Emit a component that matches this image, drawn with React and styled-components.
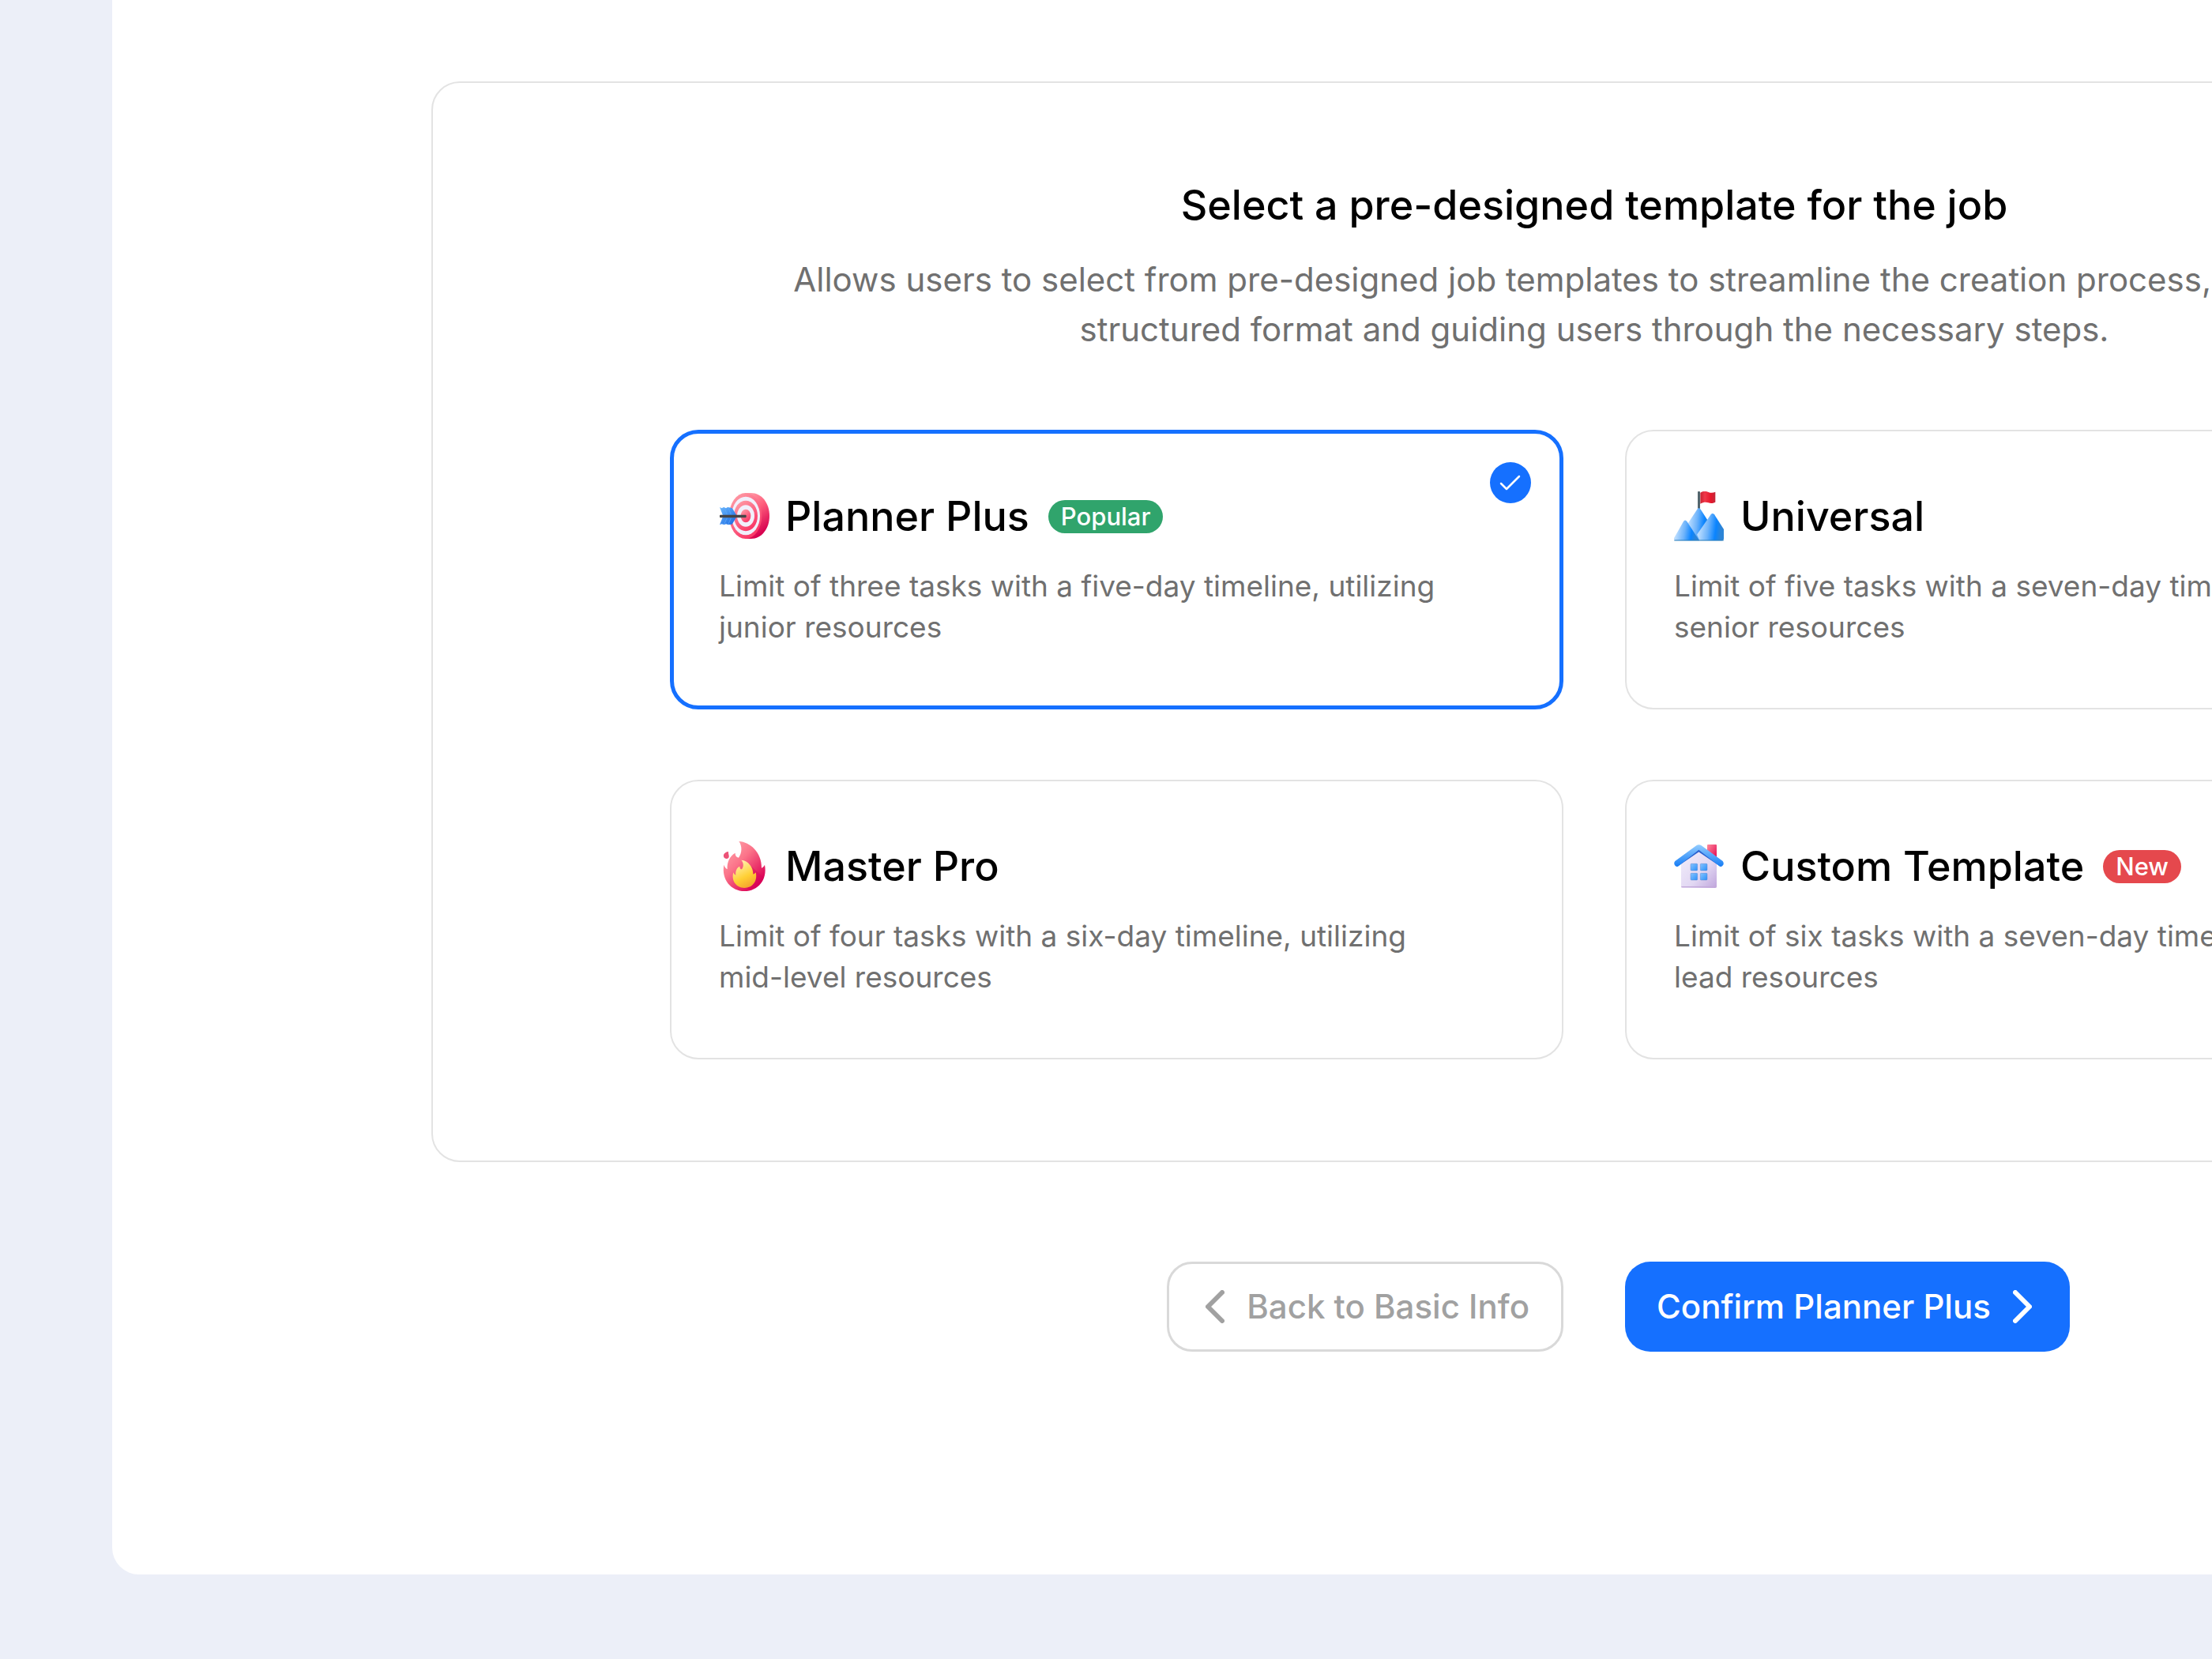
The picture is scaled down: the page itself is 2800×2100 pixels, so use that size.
import React, { useState } from 'react'
import styled, { createGlobalStyle } from 'styled-components'

const GlobalStyle = createGlobalStyle`
    * {
        box-sizing: border-box;
    }
    body {
        margin: 0;
        background-color: #eceff8;
        font-family: Inter, "Liberation Sans", sans-serif;
        color: #000;
    }
    h1, h2, p {
        margin: 0;
    }
`

const Page = styled.div`
    min-height: 100vh;
    padding-left: 142px;
    overflow: hidden;
`

const Sheet = styled.main`
    width: max-content;
    padding: 103px 404px 282px;
    border-radius: 0 0 34px 34px;
    background-color: #fff;
`

const Panel = styled.section`
    width: calc(105vw + 4px);
    padding: 123px 300px 128px;
    border: 2px solid #e3e3e3;
    border-radius: 36px;
`

const Intro = styled.header`
    display: flex;
    flex-direction: column;
    gap: 30px;
    margin-bottom: 96px;
    text-align: center;
`

const Heading = styled.h1`
    font-size: 52px;
    line-height: 64px;
    font-weight: 500;
`

const Lead = styled.p`
    font-size: 42px;
    line-height: 63px;
    color: #707070;
    white-space: pre-line;
`

const Columns = styled.div`
    display: grid;
    grid-template-columns: 1fr 1fr;
    gap: 89px 78px;
`

const CardBody = styled.label`
    position: relative;
    display: flex;
    flex-direction: column;
    gap: 30px;
    padding: 76px 60px;
    border: 2px solid #e3e3e3;
    border-radius: 36px;
    background-color: #fff;
    cursor: pointer;
    &:has(input:checked) {
        padding: 73px 57px;
        border: 5px solid #1570ff;
    }
`

const CardTop = styled.div`
    display: flex;
    align-items: center;
`

const CardIcon = styled.svg`
    width: 64px;
    height: 64px;
    margin-right: 20px;
`

const CardTitle = styled.h2`
    font-size: 52px;
    line-height: 64px;
    font-weight: 500;
`

const CardText = styled.p`
    font-size: 37px;
    line-height: 52px;
    color: #707070;
    white-space: pre-line;
`

const Badge = styled.span`
    margin-left: 24px;
    padding: 0 16px;
    border-radius: 21px;
    font-size: 31px;
    line-height: 42px;
    font-weight: 500;
    color: #fff;
    background-color: ${props => props.$color};
`

const Mark = styled.span`
    position: absolute;
    top: 36px;
    right: 36px;
    display: grid;
    & > * {
        grid-area: 1 / 1;
    }
`

const Radio = styled.input`
    appearance: none;
    width: 52px;
    height: 52px;
    margin: 0;
    border-radius: 50%;
    cursor: pointer;
    &:checked {
        background-color: #1570ff;
    }
`

const Tick = styled.svg`
    width: 52px;
    height: 52px;
    fill: none;
    stroke: #fff;
    stroke-width: 2.5;
    stroke-linecap: round;
    stroke-linejoin: round;
    pointer-events: none;
`

const Actions = styled(Columns)`
    width: calc(105vw + 4px);
    margin-top: 126px;
    padding: 0 302px;
`

const Button = styled.button`
    display: flex;
    align-items: center;
    gap: 28px;
    height: 114px;
    border-radius: 32px;
    font-family: inherit;
    font-size: 42px;
    line-height: 64px;
    font-weight: 500;
    cursor: pointer;
`

const BackButton = styled(Button)`
    justify-self: end;
    padding: 0 40px 0 46px;
    border: 3px solid #d9d9d9;
    color: #a1a1a1;
    background-color: #fff;
`

const ConfirmButton = styled(Button)`
    justify-self: start;
    padding: 0 48px 0 40px;
    border: none;
    color: #fff;
    background-color: #1570ff;
`

const Chevron = styled.svg`
    width: 24px;
    height: 42px;
    fill: none;
    stroke: currentColor;
    stroke-width: 6;
    stroke-linecap: round;
    stroke-linejoin: round;
`

function TargetIcon () {
    return <CardIcon viewBox="30 36 192 192" aria-hidden="true">
        <defs>
            <linearGradient id="targetSide" x1="0" y1="0" x2="0.4" y2="1">
                <stop offset="0" stopColor="#ffa3ad"/>
                <stop offset="0.45" stopColor="#ff5f7c"/>
                <stop offset="1" stopColor="#d6004f"/>
            </linearGradient>
            <linearGradient id="targetFace" x1="0.2" y1="0" x2="0.8" y2="1">
                <stop offset="0" stopColor="#ff9ca6"/>
                <stop offset="1" stopColor="#f92f62"/>
            </linearGradient>
            <linearGradient id="feather" x1="0" y1="0" x2="1" y2="1">
                <stop offset="0" stopColor="#6ab6fd"/>
                <stop offset="1" stopColor="#1565e0"/>
            </linearGradient>
        </defs>
        <path d="M131 42 H152 C192 42 222 80 222 129 S192 216 152 216 H131 Z" fill="url(#targetSide)"/>
        <ellipse cx="131" cy="129" rx="62" ry="87" fill="url(#targetFace)"/>
        <ellipse cx="132" cy="129" rx="54" ry="73" fill="#f1f0fc"/>
        <ellipse cx="132" cy="129" rx="45" ry="58" fill="url(#targetFace)"/>
        <ellipse cx="132" cy="129" rx="33" ry="41" fill="#f1f0fc"/>
        <ellipse cx="132" cy="129" rx="19" ry="25" fill="url(#targetFace)"/>
        <path d="M33 96 L41 100 L48 96 L57 100 L63 96 L80 99 L99 130 L80 161 L65 163 L57 160 L50 163 L41 160 L33 163 L46 130 Z" fill="url(#feather)"/>
        <path d="M50 97 L61 124 M65 97 L76 124 M61 137 L49 162 M76 137 L65 162" stroke="#62aefa" strokeWidth="2"/>
        <rect x="33" y="125" width="101" height="11" rx="3" fill="#454548"/>
    </CardIcon>
}

function MountainIcon () {
    return <CardIcon viewBox="30 36 192 192" aria-hidden="true">
        <defs>
            <linearGradient id="rock" x1="0.1" y1="0.5" x2="0.9" y2="0.6">
                <stop offset="0" stopColor="#b9dcff"/>
                <stop offset="0.4" stopColor="#6db3fb"/>
                <stop offset="0.75" stopColor="#0a84ff"/>
                <stop offset="1" stopColor="#2c84d6"/>
            </linearGradient>
            <linearGradient id="flag" x1="0" y1="0" x2="1" y2="0">
                <stop offset="0" stopColor="#c9202f"/>
                <stop offset="0.3" stopColor="#f0384a"/>
                <stop offset="0.7" stopColor="#e6172b"/>
                <stop offset="1" stopColor="#c2283a"/>
            </linearGradient>
        </defs>
        <rect x="120" y="36" width="9" height="70" rx="2" fill="#53656d"/>
        <path d="M130 41 C143 33 152 35 161 39 C170 43 178 42 187 38 V77 C177 82 169 82 160 79 C150 76 142 77 130 83 Z" fill="url(#flag)"/>
        <path d="M118 104 Q124 94 131 104 L172 168 L125 223 L76 168 Z" fill="url(#rock)"/>
        <path d="M30 214 L66 150 Q72 141 79 150 L126 223 H36 Q30 223 30 214 Z" fill="url(#rock)"/>
        <path d="M117 200 L170 124 Q176 116 183 124 L219 180 V216 Q219 223 212 223 H127 Z" fill="url(#rock)"/>
        <path d="M32 222 H217" stroke="#2d7fb8" strokeWidth="3" strokeLinecap="round"/>
    </CardIcon>
}

function FlameIcon () {
    return <CardIcon viewBox="30 30 192 192" aria-hidden="true">
        <defs>
            <linearGradient id="flameOuter" x1="0.1" y1="0.1" x2="0.8" y2="0.9">
                <stop offset="0" stopColor="#ffa0a8"/>
                <stop offset="0.4" stopColor="#fb7389"/>
                <stop offset="0.75" stopColor="#e92f68"/>
                <stop offset="1" stopColor="#db0058"/>
            </linearGradient>
            <linearGradient id="flameInner" x1="0.2" y1="0.1" x2="0.6" y2="1">
                <stop offset="0" stopColor="#fff0ae"/>
                <stop offset="0.6" stopColor="#ffd034"/>
                <stop offset="1" stopColor="#f5a52e"/>
            </linearGradient>
        </defs>
        <path d="M106 30 C148 32 193 72 192 131 C197 129 201 125 204 119 C215 176 178 219 127 219 C76 219 39 175 49 119 C52 128 56 133 62 136 C60 108 72 85 92 74 C91 83 96 90 105 92 C118 74 119 48 106 30 Z" fill="url(#flameOuter)"/>
        <path d="M66 69 C65 78 70 84 68 90 C64 99 51 98 48 88 C46 77 56 70 66 69 Z" fill="#ec5277"/>
        <path d="M150 122 C166 137 178 149 201 166 C190 199 163 213 137 210 L166 168 Z" fill="#d40055" opacity="0.35"/>
        <path d="M115 101 C141 103 161 128 160 155 C164 154 167 152 170 148 C178 182 157 207 127 207 C96 207 76 180 85 148 C87 153 90 157 94 158 C92 141 99 129 109 125 C109 132 112 136 117 136 C125 125 124 111 115 101 Z" fill="url(#flameInner)"/>
    </CardIcon>
}

function HouseIcon () {
    return <CardIcon viewBox="30 30 192 192" aria-hidden="true">
        <defs>
            <linearGradient id="chimney" x1="0" y1="0" x2="1" y2="1">
                <stop offset="0" stopColor="#ff8b9c"/>
                <stop offset="1" stopColor="#e0004f"/>
            </linearGradient>
            <linearGradient id="wall" x1="0" y1="0" x2="1" y2="1">
                <stop offset="0" stopColor="#f3effb"/>
                <stop offset="0.6" stopColor="#e2d8f3"/>
                <stop offset="1" stopColor="#bfa5dc"/>
            </linearGradient>
            <linearGradient id="roof" x1="0" y1="0" x2="0" y2="1">
                <stop offset="0" stopColor="#94cdff"/>
                <stop offset="1" stopColor="#167df5"/>
            </linearGradient>
            <linearGradient id="pane" x1="0" y1="0" x2="1" y2="1">
                <stop offset="0" stopColor="#86c4ff"/>
                <stop offset="1" stopColor="#2b90fa"/>
            </linearGradient>
        </defs>
        <path d="M156 45 Q156 42 159 42 H189 Q192 42 192 45 V98 L156 72 Z" fill="url(#chimney)"/>
        <path d="M57 108 L124 56 L192 108 V201 Q192 207 186 207 H63 Q57 207 57 201 Z" fill="url(#wall)"/>
        <path d="M58 203 H191" stroke="#c3a9d9" strokeWidth="4"/>
        <path d="M42 118 L124 62 L207 118" fill="none" stroke="#2b62cf" strokeWidth="14" strokeLinecap="round" strokeLinejoin="round"/>
        <path d="M34 105 L115 46 Q124 39 134 46 L215 105 Q221 113 216 121 Q209 129 201 123 L124 62 L48 123 Q39 129 33 121 Q28 112 34 105 Z" fill="url(#roof)"/>
        <g fill="url(#pane)" stroke="#5a86cf" strokeWidth="1.5">
            <rect x="93" y="115" width="26" height="26" rx="3"/>
            <rect x="130" y="115" width="26" height="26" rx="3"/>
            <rect x="93" y="151" width="26" height="26" rx="3"/>
            <rect x="130" y="151" width="26" height="26" rx="3"/>
        </g>
    </CardIcon>
}

const templates = [
    {
        name: 'Planner Plus',
        text: 'Limit of three tasks with a five-day timeline, utilizing\njunior resources',
        badge: { label: 'Popular', color: '#30a46c' },
        Icon: TargetIcon
    },
    {
        name: 'Universal',
        text: 'Limit of five tasks with a seven-day timeline, utilizing\nsenior resources',
        Icon: MountainIcon
    },
    {
        name: 'Master Pro',
        text: 'Limit of four tasks with a six-day timeline, utilizing\nmid-level resources',
        Icon: FlameIcon
    },
    {
        name: 'Custom Template',
        text: 'Limit of six tasks with a seven-day timeline, utilizing\nlead resources',
        badge: { label: 'New', color: '#e5484d' },
        Icon: HouseIcon
    }
]

function TemplateCard ({ template, selected, onSelect }) {
    const { name, text, badge, Icon } = template
    return <CardBody>
        <CardTop>
            <Icon/>
            <CardTitle>{name}</CardTitle>
            {badge && <Badge $color={badge.color}>{badge.label}</Badge>}
        </CardTop>
        <CardText>{text}</CardText>
        <Mark>
            <Radio type="radio" name="template" checked={selected} onChange={onSelect}/>
            {selected && <Tick viewBox="0 0 52 52"><path d="M14 27 L21 34 L37 18"/></Tick>}
        </Mark>
    </CardBody>
}

export default function App () {
    const [selected, setSelected] = useState('Planner Plus')

    return <Page>
        <GlobalStyle/>
        <Sheet>
            <Panel>
                <Intro>
                    <Heading>Select a pre-designed template for the job</Heading>
                    <Lead>
                        {'Allows users to select from pre-designed job templates to streamline the creation process, providing a\nstructured format and guiding users through the necessary steps.'}
                    </Lead>
                </Intro>
                <Columns>
                    {templates.map(template => <TemplateCard
                        key={template.name}
                        template={template}
                        selected={template.name === selected}
                        onSelect={() => setSelected(template.name)}
                    />)}
                </Columns>
            </Panel>
            <Actions>
                <BackButton type="button">
                    <Chevron viewBox="0 0 24 42"><path d="M21 3 L3 21 L21 39"/></Chevron>
                    Back to Basic Info
                </BackButton>
                <ConfirmButton type="button">
                    Confirm {selected}
                    <Chevron viewBox="0 0 24 42"><path d="M3 3 L21 21 L3 39"/></Chevron>
                </ConfirmButton>
            </Actions>
        </Sheet>
    </Page>
}
